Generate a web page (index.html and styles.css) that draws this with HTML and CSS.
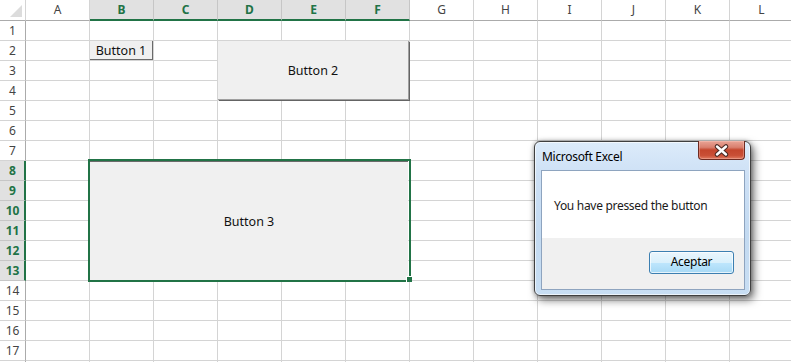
FILE: index.html
```html
<!DOCTYPE html>
<html>
<head>
<meta charset="utf-8">
<link rel="stylesheet" href="styles.css">
</head>
<body>
<div class="sheet">
  <div class="corner"></div>
  <div class="colheads">
    <div class="ch">A</div>
    <div class="ch sel">B</div>
    <div class="ch sel">C</div>
    <div class="ch sel">D</div>
    <div class="ch sel">E</div>
    <div class="ch sel">F</div>
    <div class="ch">G</div>
    <div class="ch">H</div>
    <div class="ch">I</div>
    <div class="ch">J</div>
    <div class="ch">K</div>
    <div class="ch">L</div>
  </div>
  <div class="rowheads">
    <div class="rh">1</div>
    <div class="rh">2</div>
    <div class="rh">3</div>
    <div class="rh">4</div>
    <div class="rh">5</div>
    <div class="rh">6</div>
    <div class="rh">7</div>
    <div class="rh sel">8</div>
    <div class="rh sel">9</div>
    <div class="rh sel">10</div>
    <div class="rh sel">11</div>
    <div class="rh sel">12</div>
    <div class="rh sel">13</div>
    <div class="rh">14</div>
    <div class="rh">15</div>
    <div class="rh">16</div>
    <div class="rh">17</div>
    <div class="rh"></div>
  </div>
  <div class="cells">
    <div class="btn btn1">Button 1</div>
    <div class="btn btn2">Button 2</div>
    <div class="btn btn3">Button 3</div>
    <div class="selection"></div>
    <div class="handle"></div>

    <div class="dialog">
      <div class="titlebar">
        <span class="title">Microsoft Excel</span>
        <div class="close">
          <svg width="47" height="19" viewBox="0 0 47 19">
            <path d="M19 5.5 L28 13.5 M28 5.5 L19 13.5" stroke="#4a2a24" stroke-width="4.6" stroke-linecap="round"/>
            <path d="M19 5.5 L28 13.5 M28 5.5 L19 13.5" stroke="#ffffff" stroke-width="2.4" stroke-linecap="round"/>
          </svg>
        </div>
      </div>
      <div class="client">
        <div class="message">You have pressed the button</div>
        <div class="footer">
          <div class="okbtn">Aceptar</div>
        </div>
      </div>
    </div>
  </div>
</div>
</body>
</html>
```
FILE: styles.css
```css
html, body {
  margin: 0;
  padding: 0;
  overflow: hidden;
  background: #ffffff;
}

.sheet {
  width: 791px;
  height: 362px;
  display: grid;
  grid-template-columns: 26px 765px;
  grid-template-rows: 21px 341px;
  overflow: hidden;
  font-family: "Noto Sans", "Open Sans", sans-serif;
}

.corner {
  box-sizing: border-box;
  border-right: 1px solid #d4d4d4;
  border-bottom: 1px solid #ababab;
  position: relative;
  background: #ffffff;
}
.corner::after {
  content: "";
  position: absolute;
  left: 10px;
  top: 5px;
  width: 12px;
  height: 12px;
  background: #dcdcdc;
  clip-path: polygon(100% 0, 100% 100%, 0 100%);
}

.colheads {
  display: flex;
  overflow: hidden;
}
.ch {
  flex: 0 0 64px;
  box-sizing: border-box;
  height: 21px;
  border-right: 1px solid #d4d4d4;
  border-bottom: 1px solid #ababab;
  font-size: 12px;
  line-height: 20px;
  text-align: center;
  color: #444444;
}
.ch.sel {
  background: #e1e1e1;
  border-right-color: #c6c6c6;
  border-bottom: 2px solid #217346;
  line-height: 19px;
  color: #217346;
  font-weight: bold;
}

.rowheads {
  display: flex;
  flex-direction: column;
  overflow: hidden;
}
.rh {
  flex: 0 0 20px;
  box-sizing: border-box;
  border-right: 1px solid #ababab;
  border-bottom: 1px solid #d4d4d4;
  font-size: 12px;
  line-height: 19px;
  text-align: center;
  color: #444444;
}
.rh.sel {
  background: #e1e1e1;
  border-right: 2px solid #217346;
  border-bottom-color: #c6c6c6;
  padding-left: 1px;
  color: #217346;
  font-weight: bold;
}

.cells {
  position: relative;
  overflow: hidden;
  background-color: #ffffff;
  background-image:
    repeating-linear-gradient(to right, transparent 0 63px, #d4d4d4 63px 64px),
    repeating-linear-gradient(to bottom, transparent 0 19px, #d4d4d4 19px 20px);
}

.btn {
  position: absolute;
  box-sizing: border-box;
  background: #f0f0f0;
  display: flex;
  align-items: center;
  justify-content: center;
  font-size: 12.5px;
  color: #111111;
}
.btn1 {
  left: 64px;
  top: 20px;
  width: 63px;
  height: 19px;
  border-right: 1px solid #6a6a6a;
  border-bottom: 1px solid #6a6a6a;
}
.btn2 {
  left: 192px;
  top: 20px;
  width: 191px;
  height: 59px;
  border-right: 1px solid #a0a0a0;
  border-bottom: 1px solid #a0a0a0;
  box-shadow: 1px 1px 0 #646464;
}
.btn3 {
  left: 64px;
  top: 140px;
  width: 318px;
  height: 119px;
  border-top: 1px solid #6a6a6a;
}

.selection {
  position: absolute;
  left: 62px;
  top: 138px;
  width: 323px;
  height: 123px;
  box-sizing: border-box;
  border: 2px solid #217346;
}
.handle {
  position: absolute;
  left: 380px;
  top: 255px;
  width: 6px;
  height: 6px;
  box-sizing: border-box;
  background: #217346;
  border-left: 1px solid #ffffff;
  border-top: 1px solid #ffffff;
}

.dialog {
  position: absolute;
  left: 508px;
  top: 120px;
  width: 217px;
  height: 155px;
  box-sizing: border-box;
  border: 1px solid #3f3f3f;
  border-radius: 6px;
  padding: 0 5px 5px 6px;
  display: flex;
  flex-direction: column;
  background: linear-gradient(to bottom, #dcebfa 0, #cde0f5 22%, #c3daf1 60%, #c8def3 100%);
  box-shadow: inset 0 0 0 1px rgba(255, 255, 255, 0.65), 3px 4px 9px rgba(0, 0, 0, 0.55), 0 0 4px rgba(0, 0, 0, 0.3);
  font-family: "Noto Sans", "Open Sans", sans-serif;
  letter-spacing: -0.3px;
}
.titlebar {
  position: relative;
  height: 28px;
  flex: 0 0 28px;
  display: flex;
  align-items: center;
}
.title {
  font-size: 12px;
  color: #000000;
  padding-left: 1px;
  padding-top: 1px;
}
.close {
  position: absolute;
  top: -1px;
  right: 0;
  width: 47px;
  height: 19px;
  box-sizing: border-box;
  border: 1px solid #6e2a20;
  border-top: none;
  border-radius: 0 0 4px 4px;
  background: linear-gradient(to bottom, #e9a496 0, #d9806f 35%, #c4452c 50%, #c94f36 80%, #e07a60 100%);
  box-shadow: inset 0 0 0 1px rgba(255, 210, 200, 0.35);
}
.close svg {
  display: block;
  position: absolute;
  left: -1px;
  top: 0;
}

.client {
  flex: 1;
  box-sizing: border-box;
  border: 1px solid #8ea4bf;
  background: #ffffff;
  display: flex;
  flex-direction: column;
}
.message {
  flex: 0 0 67px;
  box-sizing: border-box;
  padding: 27px 0 0 12px;
  font-size: 12px;
  line-height: 16px;
  color: #1a1a1a;
  background: #ffffff;
}
.footer {
  flex: 1;
  background: #f0f0f0;
  display: flex;
  justify-content: flex-end;
  align-items: flex-start;
  padding: 13px 10px 0 0;
}
.okbtn {
  width: 85px;
  height: 23px;
  box-sizing: border-box;
  border: 1px solid #3c7fb1;
  border-radius: 3px;
  background: linear-gradient(to bottom, #eaf6fd 0, #d9f0fc 50%, #bee6fd 51%, #a7d9f5 100%);
  box-shadow: inset 0 0 0 1px rgba(255, 255, 255, 0.7);
  font-size: 12px;
  line-height: 20px;
  text-align: center;
  color: #000000;
}
```
